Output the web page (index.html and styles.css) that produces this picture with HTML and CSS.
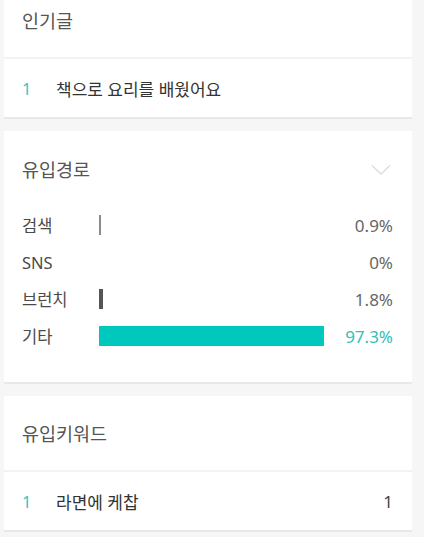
FILE: index.html
```html
<!DOCTYPE html>
<html lang="ko">
<head>
<meta charset="utf-8">
<link rel="stylesheet" href="styles.css">
</head>
<body>
<div class="page">
  <section class="card">
    <div class="card-head"><h2 class="title">인기글</h2></div>
    <div class="list-row">
      <span class="rank">1</span>
      <span class="item">책으로 요리를 배웠어요</span>
    </div>
  </section>

  <section class="card">
    <div class="card-head">
      <h2 class="title">유입경로</h2>
      <svg class="chev" width="20" height="12" viewBox="0 0 20 12"><path d="M1 1.5 L10 10 L19 1.5" fill="none" stroke="#dcdcdc" stroke-width="1.3"/></svg>
    </div>
    <div class="stats">
      <div class="stat">
        <span class="label">검색</span>
        <span class="track"><span class="bar bar-light" style="width:0.9%"></span></span>
        <span class="pct">0.9%</span>
      </div>
      <div class="stat">
        <span class="label">SNS</span>
        <span class="track"></span>
        <span class="pct">0%</span>
      </div>
      <div class="stat">
        <span class="label">브런치</span>
        <span class="track"><span class="bar bar-dark" style="width:1.8%"></span></span>
        <span class="pct">1.8%</span>
      </div>
      <div class="stat">
        <span class="label">기타</span>
        <span class="track"><span class="bar bar-teal" style="width:97.3%"></span></span>
        <span class="pct pct-teal">97.3%</span>
      </div>
    </div>
  </section>

  <section class="card">
    <div class="card-head"><h2 class="title">유입키워드</h2></div>
    <div class="list-row">
      <span class="rank">1</span>
      <span class="item">라면에 케찹</span>
      <span class="count">1</span>
    </div>
  </section>
</div>
</body>
</html>
```

FILE: styles.css
```css
html, body {
  margin: 0;
  padding: 0;
  background: #f6f6f6;
}
body {
  font-family: "Noto Sans", "Noto Sans CJK KR", sans-serif;
  width: 424px;
  height: 537px;
  overflow: hidden;
}
.page {
  margin-top: -17px;
  padding: 0 12px 0 4px;
  display: flex;
  flex-direction: column;
  gap: 12px;
}
.card {
  background: #fff;
  border-bottom: 2px solid #e8e8e8;
}
.card-head {
  height: 76px;
  padding: 0 20px 0 18px;
  display: flex;
  align-items: center;
  justify-content: space-between;
  border-bottom: 2px solid #f3f3f3;
  box-sizing: border-box;
}
.title {
  margin: 0;
  font-size: 18.5px;
  font-weight: 400;
  color: #555;
}
.chev { margin-right: 1px; margin-top: 2px; }
.list-row {
  height: 58px;
  padding: 0 19px 0 18px;
  display: flex;
  align-items: center;
  font-size: 17px;
  color: #333;
}
.rank {
  width: 34px;
  color: #3fc4bd;
  font-size: 16.5px;
}
.item { flex: 1; }
.count { color: #444; }
.stats {
  padding: 8px 19px 36px 18px;
  display: flex;
  flex-direction: column;
  gap: 17px;
}
.card:nth-child(2) .card-head { border-bottom: 0; }
.stat {
  display: flex;
  align-items: center;
  height: 20px;
}
.label {
  width: 77px;
  font-size: 16.5px;
  color: #4a4a4a;
}
.track {
  width: 231px;
  height: 20px;
  display: flex;
}
.bar { height: 20px; display: block; }
.bar-light { background: #8a8a8a; min-width: 2px; }
.bar-dark { background: #555; min-width: 4px; }
.bar-teal { background: #00c8bd; }
.pct {
  flex: 1;
  text-align: right;
  font-size: 17px;
  color: #666;
}
.pct-teal { color: #2fc1b8; }
```
